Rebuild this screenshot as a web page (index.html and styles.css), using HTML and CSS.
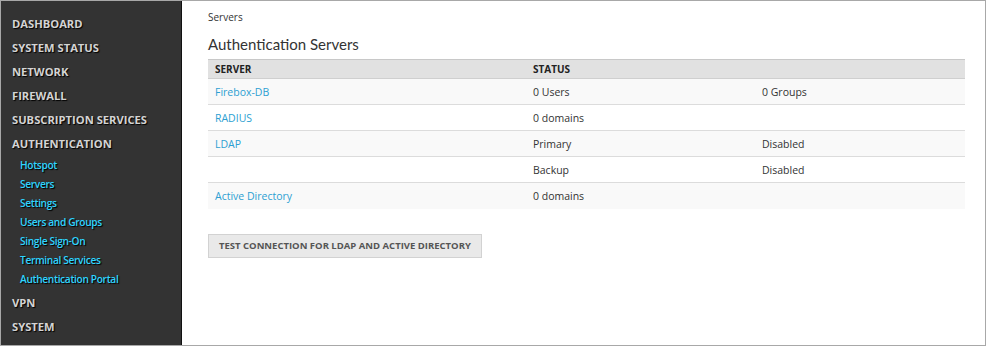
FILE: index.html
```html
<!DOCTYPE html>
<html>
<head>
<meta charset="utf-8">
<link rel="stylesheet" href="styles.css">
</head>
<body>
<div class="frame">
  <nav class="sidebar">
    <div class="nav-item">DASHBOARD</div>
    <div class="nav-item">SYSTEM STATUS</div>
    <div class="nav-item">NETWORK</div>
    <div class="nav-item">FIREWALL</div>
    <div class="nav-item">SUBSCRIPTION SERVICES</div>
    <div class="nav-item">AUTHENTICATION</div>
    <ul class="sub-list">
      <li>Hotspot</li>
      <li>Servers</li>
      <li>Settings</li>
      <li>Users and Groups</li>
      <li>Single Sign-On</li>
      <li>Terminal Services</li>
      <li>Authentication Portal</li>
    </ul>
    <div class="nav-item">VPN</div>
    <div class="nav-item">SYSTEM</div>
  </nav>
  <main class="main">
    <div class="breadcrumb">Servers</div>
    <h1 class="title">Authentication Servers</h1>
    <table class="servers">
      <thead>
        <tr><th class="c1">SERVER</th><th class="c2">STATUS</th><th class="c3"></th></tr>
      </thead>
      <tbody>
        <tr class="odd"><td><a>Firebox-DB</a></td><td>0 Users</td><td>0 Groups</td></tr>
        <tr><td><a>RADIUS</a></td><td>0 domains</td><td></td></tr>
        <tr class="odd"><td><a>LDAP</a></td><td>Primary</td><td>Disabled</td></tr>
        <tr><td></td><td>Backup</td><td>Disabled</td></tr>
        <tr class="odd last"><td><a>Active Directory</a></td><td>0 domains</td><td></td></tr>
      </tbody>
    </table>
    <button class="test-btn">TEST CONNECTION FOR LDAP AND ACTIVE DIRECTORY</button>
  </main>
</div>
</body>
</html>
```

FILE: styles.css
```css
* { box-sizing: border-box; }
html, body { margin: 0; padding: 0; background: #fff; }
.frame {
  width: 986px;
  height: 346px;
  border: 1px solid #a8a8a8;
  display: flex;
  font-family: "Open Sans", "Liberation Sans", sans-serif;
  overflow: hidden;
}
.sidebar {
  width: 181px;
  flex: none;
  background: #333333;
  border-right: 1px solid #111;
  padding-top: 11px;
}
.nav-item {
  height: 24px;
  line-height: 24px;
  padding-left: 11px;
  font-size: 11.2px;
  font-weight: 700;
  color: #d4d4d4;
  text-shadow: 1px 1px 1px #000;
  white-space: nowrap;
}
.sub-list {
  list-style: none;
  margin: 0 0 2px 0;
  padding: 0;
}
.sub-list li {
  height: 19px;
  line-height: 19px;
  padding-left: 19px;
  font-size: 10.2px;
  font-weight: 600;
  letter-spacing: -0.35px;
  color: #2fd4ff;
  text-shadow: 1px 1px 1px #000;
  white-space: nowrap;
}
.main {
  flex: 1;
  padding: 0 19px 0 26px;
  color: #333;
}
.breadcrumb {
  font-size: 10px;
  line-height: 14px;
  margin-top: 9px;
  color: #333;
}
.title {
  font-family: "Lato", "Open Sans", sans-serif;
  font-weight: 400;
  font-size: 15px;
  line-height: 18px;
  margin: 11px 0 6px 0;
  color: #333;
}
.servers {
  width: 757px;
  border-collapse: collapse;
  font-size: 10.5px;
}
.servers th {
  background: #e1e1e1;
  border-top: 1px solid #c8c8c8;
  border-bottom: 1px solid #cfcfcf;
  height: 19px;
  padding: 0 7px;
  text-align: left;
  font-size: 10px;
  font-weight: 700;
  color: #222;
}
.servers .c1 { width: 318px; }
.servers .c2 { width: 229px; }
.servers td {
  height: 26px;
  padding: 0 7px;
  border-bottom: 1px solid #dcdcdc;
  color: #333;
}
.servers tr.odd td { background: #f9f9f9; }
.servers tr.last td { border-bottom: none; }
.servers a { color: #2d9fd2; }
.test-btn {
  display: block;
  margin-top: 25px;
  height: 24px;
  padding: 0 10px;
  background: #e9e9e9;
  border: 1px solid #d2d2d2;
  font-family: "Open Sans", "Liberation Sans", sans-serif;
  font-size: 9.5px;
  font-weight: 700;
  color: #555;
  letter-spacing: 0;
}
```
